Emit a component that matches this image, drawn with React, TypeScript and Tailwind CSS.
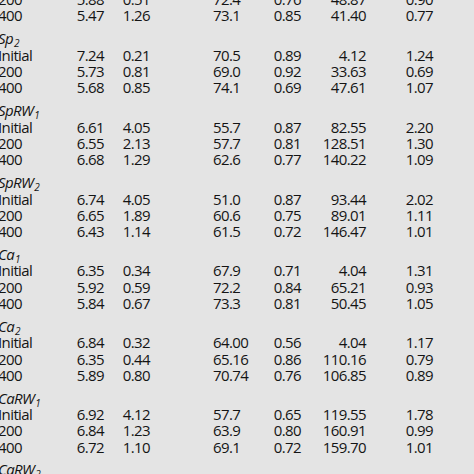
import React from "react";

type Row = [string, string, string, string, string, string, string];
type Group = { name: string; sub: string; rows: Row[] };

const top: Row[] = [
  ["200", "5.88", "0.51", "72.4", "0.76", "48.87", "0.90"],
  ["400", "5.47", "1.26", "73.1", "0.85", "41.40", "0.77"],
];

const groups: Group[] = [
  {
    name: "Sp",
    sub: "2",
    rows: [
      ["Initial", "7.24", "0.21", "70.5", "0.89", "4.12", "1.24"],
      ["200", "5.73", "0.81", "69.0", "0.92", "33.63", "0.69"],
      ["400", "5.68", "0.85", "74.1", "0.69", "47.61", "1.07"],
    ],
  },
  {
    name: "SpRW",
    sub: "1",
    rows: [
      ["Initial", "6.61", "4.05", "55.7", "0.87", "82.55", "2.20"],
      ["200", "6.55", "2.13", "57.7", "0.81", "128.51", "1.30"],
      ["400", "6.68", "1.29", "62.6", "0.77", "140.22", "1.09"],
    ],
  },
  {
    name: "SpRW",
    sub: "2",
    rows: [
      ["Initial", "6.74", "4.05", "51.0", "0.87", "93.44", "2.02"],
      ["200", "6.65", "1.89", "60.6", "0.75", "89.01", "1.11"],
      ["400", "6.43", "1.14", "61.5", "0.72", "146.47", "1.01"],
    ],
  },
  {
    name: "Ca",
    sub: "1",
    rows: [
      ["Initial", "6.35", "0.34", "67.9", "0.71", "4.04", "1.31"],
      ["200", "5.92", "0.59", "72.2", "0.84", "65.21", "0.93"],
      ["400", "5.84", "0.67", "73.3", "0.81", "50.45", "1.05"],
    ],
  },
  {
    name: "Ca",
    sub: "2",
    rows: [
      ["Initial", "6.84", "0.32", "64.00", "0.56", "4.04", "1.17"],
      ["200", "6.35", "0.44", "65.16", "0.86", "110.16", "0.79"],
      ["400", "5.89", "0.80", "70.74", "0.76", "106.85", "0.89"],
    ],
  },
  {
    name: "CaRW",
    sub: "1",
    rows: [
      ["Initial", "6.92", "4.12", "57.7", "0.65", "119.55", "1.78"],
      ["200", "6.84", "1.23", "63.9", "0.80", "160.91", "0.99"],
      ["400", "6.72", "1.10", "69.1", "0.72", "159.70", "1.01"],
    ],
  },
  {
    name: "CaRW",
    sub: "2",
    rows: [],
  },
];

function DataRow({ r }: { r: Row }) {
  return (
    <div className="flex h-[16.3px] items-center whitespace-nowrap leading-[16px]">
      <div className="w-[62px] shrink-0 text-left">{r[0]}</div>
      <div className="w-[44px] shrink-0 text-right">{r[1]}</div>
      <div className="w-[46px] shrink-0 text-right">{r[2]}</div>
      <div className="w-[110px] shrink-0 pl-[63px] text-left">{r[3]}</div>
      <div className="w-[41px] shrink-0 text-right">{r[4]}</div>
      <div className="w-[65px] shrink-0 text-right">{r[5]}</div>
      <div className="w-[67px] shrink-0 text-right">{r[6]}</div>
    </div>
  );
}

export default function App() {
  return (
    <div
      className="h-[474px] w-[474px] overflow-hidden bg-[#e4e4e4] text-[#141414] text-[15px] font-medium tracking-[-0.6px]"
      style={{ fontFamily: '"Open Sans", "Noto Sans", sans-serif' }}
    >
      <div className="ml-[-2px] mt-[-9px] flex flex-col">
        {top.map((r, i) => (
          <DataRow key={"t" + i} r={r} />
        ))}
        {groups.map((g, gi) => (
          <div key={gi} className="flex flex-col pt-[6px]">
            <div className="flex h-[17px] items-center italic leading-[16px]">
              <span className="whitespace-nowrap">
                {g.name}
                <span className="relative top-[3px] ml-[1px] text-[10px] leading-none">{g.sub}</span>
              </span>
            </div>
            {g.rows.map((r, ri) => (
              <DataRow key={ri} r={r} />
            ))}
          </div>
        ))}
      </div>
    </div>
  );
}
